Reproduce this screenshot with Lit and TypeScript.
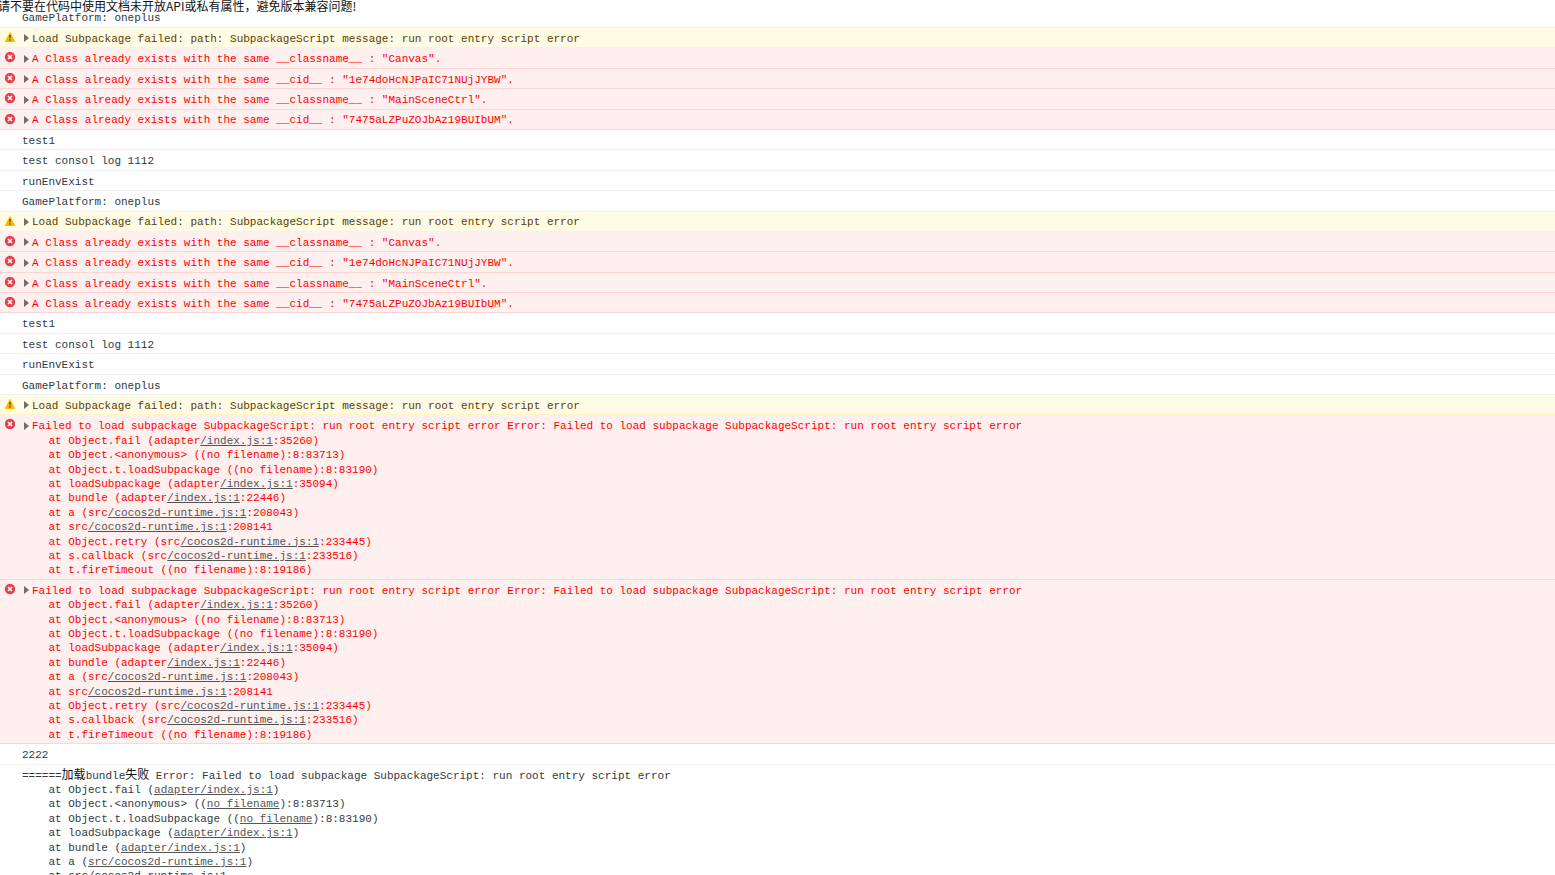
import { LitElement, html, css, nothing } from "lit";
import { customElement } from "lit/decorators.js";

type Kind = "log" | "warn" | "error";
interface Row { kind: Kind; text: unknown; arrow?: boolean; cjk?: boolean }

const link = (t: string) => html`<span class="link">${t}</span>`;
const failText = "Load Subpackage failed: path: SubpackageScript message: run root entry script error";
const errFrames = html`Failed to load subpackage SubpackageScript: run root entry script error Error: Failed to load subpackage SubpackageScript: run root entry script error
    at Object.fail (adapter${link("/index.js:1")}:35260)
    at Object.&lt;anonymous&gt; ((no filename):8:83713)
    at Object.t.loadSubpackage ((no filename):8:83190)
    at loadSubpackage (adapter${link("/index.js:1")}:35094)
    at bundle (adapter${link("/index.js:1")}:22446)
    at a (src${link("/cocos2d-runtime.js:1")}:208043)
    at src${link("/cocos2d-runtime.js:1")}:208141
    at Object.retry (src${link("/cocos2d-runtime.js:1")}:233445)
    at s.callback (src${link("/cocos2d-runtime.js:1")}:233516)
    at t.fireTimeout ((no filename):8:19186)`;

const classRows: Row[] = [
  { kind: "error", arrow: true, text: 'A Class already exists with the same __classname__ : "Canvas".' },
  { kind: "error", arrow: true, text: 'A Class already exists with the same __cid__ : "1e74doHcNJPaIC71NUjJYBW".' },
  { kind: "error", arrow: true, text: 'A Class already exists with the same __classname__ : "MainSceneCtrl".' },
  { kind: "error", arrow: true, text: 'A Class already exists with the same __cid__ : "7475aLZPuZOJbAz19BUIbUM".' },
];
const logs: Row[] = [
  { kind: "log", text: "test1" },
  { kind: "log", text: "test consol log 1112" },
  { kind: "log", text: "runEnvExist" },
];
const warn: Row = { kind: "warn", arrow: true, text: failText };
const platform: Row = { kind: "log", text: "GamePlatform: oneplus" };

const rows: Row[] = [
  platform, warn, ...classRows, ...logs,
  platform, warn, ...classRows, ...logs,
  platform, warn,
  { kind: "error", arrow: true, text: errFrames },
  { kind: "error", arrow: true, text: errFrames },
  { kind: "log", text: "2222" },
  {
    kind: "log",
    cjk: true,
    text: html`======<span class="cjk">加载</span>bundle<span class="cjk">失败</span> Error: Failed to load subpackage SubpackageScript: run root entry script error
    at Object.fail (${link("adapter/index.js:1")})
    at Object.&lt;anonymous&gt; ((${link("no filename")}):8:83713)
    at Object.t.loadSubpackage ((${link("no filename")}):8:83190)
    at loadSubpackage (${link("adapter/index.js:1")})
    at bundle (${link("adapter/index.js:1")})
    at a (${link("src/cocos2d-runtime.js:1")})
    at src/cocos2d-runtime.js:1`,
  },
];

@customElement("app-root")
export class AppRoot extends LitElement {
  static styles = css`
    :host {
      display: block;
      width: 1555px;
      height: 875px;
      overflow: hidden;
      background: #fff;
      font-family: "Liberation Mono", monospace;
      font-size: 11px;
      color: #303942;
    }
    .banner {
      height: 7.6px;
      margin-left: -2px;
      position: relative;
      z-index: 1;
      font: 12px/12px "Noto Sans CJK SC", sans-serif;
      color: #111;
      white-space: nowrap;
    }
    .row {
      display: flex;
      border-bottom: 1px solid #f0f0f0;
      padding: 3.9px 0 1.1px 22px;
      line-height: 14.4px;
      position: relative;
      white-space: pre;
    }
    .row.tight {
      padding-top: 2.9px;
    }
    .row.warn {
      background: #fffbe5;
      border-bottom-color: #fff5c2;
      color: #5c3c00;
    }
    .row.error {
      background: #fff0f0;
      border-bottom-color: #ffd6d6;
      color: #f00;
    }
    .icon {
      position: absolute;
      left: 4px;
      top: 3px;
      width: 12px;
      height: 12px;
    }
    .arrow {
      display: inline-block;
      width: 0;
      height: 0;
      margin: 0 3px 0 2px;
      border-left: 5px solid #6e6e6e;
      border-top: 4px solid transparent;
      border-bottom: 4px solid transparent;
      border-right: 0;
      vertical-align: -0.5px;
      box-sizing: content-box;
    }
    .link {
      color: #545454;
      text-decoration: underline;
    }
    .cjk {
      font-family: "Noto Sans CJK SC", sans-serif;
      font-size: 12px;
      line-height: 1;
      color: #111;
    }
  `;

  private icon(kind: Kind) {
    if (kind === "warn") {
      return html`<svg class="icon" viewBox="0 0 12 12">
        <path d="M6 1.6 10.6 10.5H1.4z" fill="#f5bd00" stroke="#f5bd00" stroke-width="1" stroke-linejoin="round"></path>
        <path d="M5.3 4h1.4l-.2 3.6H5.5zM5.3 8.3h1.4v1.4H5.3z" fill="#5c3c00"></path>
      </svg>`;
    }
    if (kind === "error") {
      return html`<svg class="icon" viewBox="0 0 12 12">
        <circle cx="6" cy="6" r="5.2" fill="#e8404a"></circle>
        <path d="M4 4 8 8M8 4 4 8" stroke="#fff" stroke-width="1.6"></path>
      </svg>`;
    }
    return nothing;
  }

  render() {
    return html`
      <div class="banner">请不要在代码中使用文档未开放API或私有属性，避免版本兼容问题!</div>
      ${rows.map(
        (r) => html`<div class="row ${r.kind} ${r.cjk ? "tight" : ""}">
          ${this.icon(r.kind)}
          <div>${r.arrow ? html`<span class="arrow"></span>` : nothing}${r.text}</div>
        </div>`
      )}
    `;
  }
}
